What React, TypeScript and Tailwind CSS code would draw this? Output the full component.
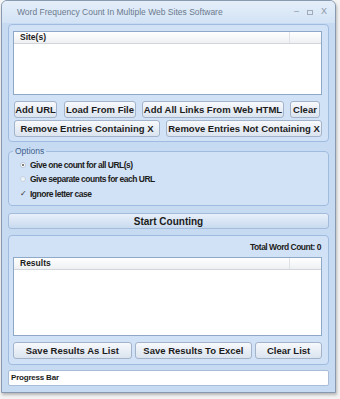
import React from 'react';

const btn =
  'h-[17px] flex items-center justify-center rounded-[3px] border border-[#a3b4ca] bg-gradient-to-b from-[#f7f9fc] to-[#dbe4ef] text-[9.5px] font-bold text-[#1c1c1c] leading-none';

function ListBox({ title, height }: { title: string; height: string }) {
  return (
    <div className={`${height} bg-white border border-[#8ea8c8] flex flex-col`}>
      <div className="h-[12px] flex bg-gradient-to-b from-white to-[#eef0f2] border-b border-[#d2d6dc]">
        <div className="w-[276px] pl-[6px] flex items-center text-[8.5px] font-bold text-[#1c1c1c] border-r border-[#dfe2e6]">
          {title}
        </div>
      </div>
    </div>
  );
}

export default function App() {
  return (
    <div className="w-[340px] h-[399px] bg-[#f3f3f3] font-['Liberation_Sans',Arial,sans-serif] overflow-hidden">
      <div className="ml-[1px] w-[335px] h-[393px] rounded-t-[6px] border border-[#8899b0] bg-[#c6daf2] shadow-[1px_2px_3px_rgba(0,0,0,0.25)] flex flex-col">
        {/* title bar */}
        <div className="h-[22px] flex items-center pl-[15px] pr-[8px] bg-gradient-to-b from-[#e4eef9] to-[#d3e3f5] rounded-t-[5px]">
          <span className="text-[8.5px] text-[#6b7a8e]">
            Word Frequency Count In Multiple Web Sites Software
          </span>
          <div className="ml-auto flex items-center gap-[8px] text-[#8b97a6] text-[9px]">
            <span>–</span>
            <span className="w-[6px] h-[5px] border border-[#a0aab8]"></span>
            <span>X</span>
          </div>
        </div>

        <div className="flex flex-col pl-[6px] pr-[6px] pt-[1px]">
          {/* sites group */}
          <div className="h-[118px] rounded-[4px] border border-[#9fbbe0] bg-[#d2e2f6] pl-[4px] pr-[6px] pt-[6px] flex flex-col">
            <ListBox title="Site(s)" height="h-[64px]" />
            <div className="mt-[6px] pl-[1px] flex gap-[6px]">
              <div className={`${btn} w-[43px]`}>Add URL</div>
              <div className={`${btn} w-[72px] ml-[1px]`}>Load From File</div>
              <div className={`${btn} w-[142px]`}>Add All Links From Web HTML</div>
              <div className={`${btn} w-[30px]`}>Clear</div>
            </div>
            <div className="mt-[2px] pl-[1px] flex gap-[6px]">
              <div className={`${btn} w-[146px]`}>Remove Entries Containing X</div>
              <div className={`${btn} w-[156px]`}>Remove Entries Not Containing X</div>
            </div>
          </div>

          {/* options */}
          <fieldset className="mt-[4px] h-[60px] rounded-[4px] border border-[#9fbbe0] bg-[#d2e2f6] pl-[11px]">
            <legend className="ml-[-7px] px-[2px] text-[8.5px] text-[#3f5f8c] leading-[10px]">Options</legend>
            <div className="mt-[4px] flex flex-col gap-[4px] text-[8.5px] font-bold text-[#1c1c1c] leading-[10px] tracking-[-0.5px]">
              <div className="flex items-center h-[10px]">
                <span className="w-[6px] h-[6px] rounded-full bg-white border border-[#b9c7d8] flex items-center justify-center">
                  <span className="w-[2px] h-[2px] rounded-full bg-[#555]"></span>
                </span>
                <span className="ml-[4px]">Give one count for all URL(s)</span>
              </div>
              <div className="flex items-center h-[10px]">
                <span className="w-[6px] h-[6px] rounded-full bg-[#eef3f9] border border-[#c6d2e0]"></span>
                <span className="ml-[4px]">Give separate counts for each URL</span>
              </div>
              <div className="flex items-center h-[10px] mt-[1px]">
                <span className="w-[6px] text-[8px] font-normal text-[#333] leading-none">✓</span>
                <span className="ml-[4px]">Ignore letter case</span>
              </div>
            </div>
          </fieldset>

          {/* start counting */}
          <div className="mt-[7px] h-[16px] flex items-center justify-center rounded-[3px] border border-[#a4bcdc] bg-gradient-to-b from-[#e8f0fa] to-[#c9daef] text-[10px] font-bold text-[#1c1c1c]">
            Start Counting
          </div>

          {/* results group */}
          <div className="mt-[6px] h-[130px] rounded-[4px] border border-[#9fbbe0] bg-[#d2e2f6] pl-[4px] pr-[6px] flex flex-col">
            <div className="h-[21px] flex items-center justify-end pr-[1px] pt-[1px] text-[8.5px] font-bold text-[#1c1c1c] tracking-[-0.5px]">
              Total Word Count: 0
            </div>
            <ListBox title="Results" height="h-[79px]" />
            <div className="mt-[6px] flex gap-[3px]">
              <div className={`${btn} w-[119px] h-[16px]`}>Save Results As List</div>
              <div className={`${btn} w-[118px] h-[16px]`}>Save Results To Excel</div>
              <div className={`${btn} w-[67px] h-[16px]`}>Clear List</div>
            </div>
          </div>

          {/* progress bar */}
          <div className="mt-[5px] h-[16px] rounded-[2px] border border-[#a9bdd8] bg-white flex items-center pl-[2px] text-[8px] font-bold text-[#1c1c1c] tracking-[-0.2px]">
            Progress Bar
          </div>
        </div>
      </div>
    </div>
  );
}
